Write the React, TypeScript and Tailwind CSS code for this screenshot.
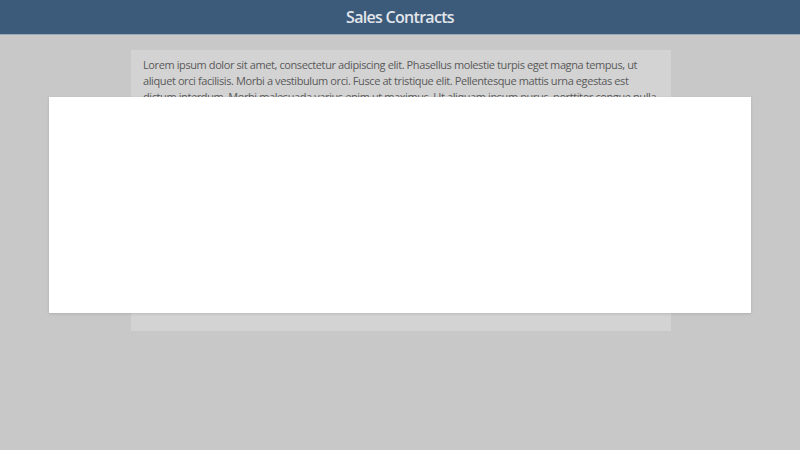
import React from "react";

export default function App() {
  return (
    <div className="relative w-[800px] h-[450px] overflow-hidden bg-[#c8c8c8]" style={{ fontFamily: '"Open Sans", sans-serif' }}>
      <div className="h-[35px] bg-[#3c5a7a] border-b border-[#9ca8b8] flex items-center justify-center">
        <span className="text-[16px] font-semibold tracking-[-0.7px] text-[#e2e6eb] leading-none">Sales Contracts</span>
      </div>
      <div className="flex pl-[131px] pt-[15px]">
        <div className="w-[540px] h-[281px] bg-[#d3d3d3] px-3 pt-[7px] overflow-hidden">
          <p className="text-[11px] leading-[16px] tracking-[-0.4px] text-[#5a5a5a] whitespace-nowrap">
            Lorem ipsum dolor sit amet, consectetur adipiscing elit. Phasellus molestie turpis eget magna tempus, ut
            <br />
            aliquet orci facilisis. Morbi a vestibulum orci. Fusce at tristique elit. Pellentesque mattis urna egestas est
            <br />
            dictum interdum. Morbi malesuada varius enim ut maximus. Ut aliquam ipsum purus, porttitor congue nulla
            <br />
            vehicula a. Nulla facilisi. Integer sit amet sem vel lectus sodales gravida. Donec viverra nisl at lorem
            <br />
            fermentum, et tincidunt eros pretium.
          </p>
        </div>
      </div>
      <div className="absolute left-[49px] top-[97px] w-[702px] h-[216px] bg-white shadow-[0_1px_3px_rgba(0,0,0,0.12)]"></div>
    </div>
  );
}
